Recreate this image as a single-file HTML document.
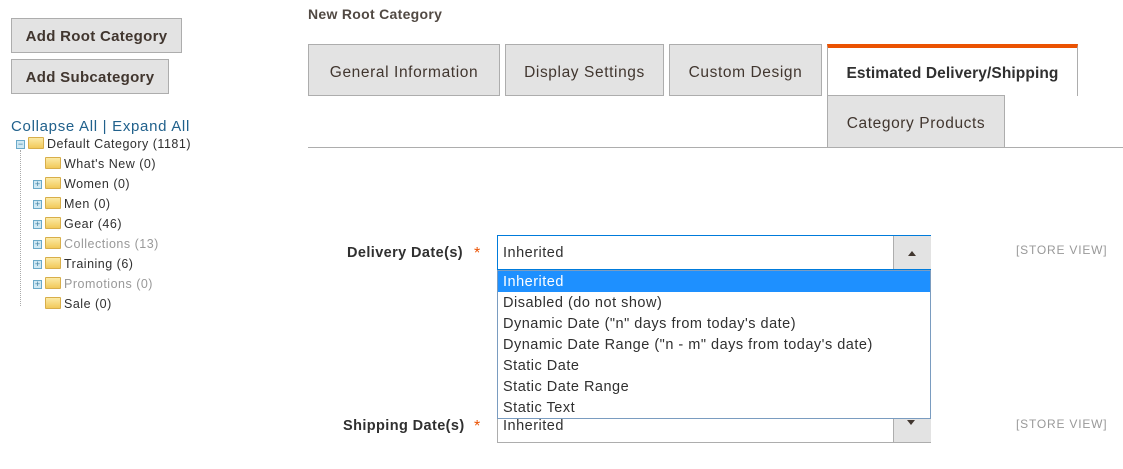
<!DOCTYPE html><html><head><style>
body{margin:0;width:1123px;height:469px;background:#fff;font-family:"Liberation Sans",sans-serif;position:relative;overflow:hidden;color:#303030}
.a{position:absolute}
.btn{position:absolute;background:#e3e3e3;border:1px solid #adadad;color:#41362f;font-size:15px;font-weight:bold;box-sizing:border-box;text-align:center;letter-spacing:0.3px}
.tab{position:absolute;background:#e3e3e3;border:1px solid #adadad;box-sizing:border-box;color:#41362f;font-size:15.5px;text-align:center;line-height:56px;letter-spacing:0.6px}
.tr{position:absolute;font-size:12.5px;color:#303030;white-space:nowrap;letter-spacing:0.5px}
.g{color:#999}
.fold{display:inline-block;width:16px;height:12px;background:linear-gradient(#fbeaa6,#f2c95a);border:1px solid #d8ae4a;box-sizing:border-box;vertical-align:-1px;margin-right:3px;border-radius:1px}
.pl{position:absolute;width:9px;height:9px;border:1px solid #6aa9c9;background:#cfe8f3;box-sizing:border-box;font-size:9px;line-height:7px;text-align:center;color:#3b7fa5}
.opt{position:absolute;left:498px;width:432px;height:21px;font-size:14.5px;line-height:23px;padding-left:5px;box-sizing:border-box;color:#303030;letter-spacing:0.5px;white-space:nowrap}
</style></head><body>
<div class="btn" style="left:11px;top:18px;width:171px;height:35px;line-height:35px">Add Root Category</div>
<div class="btn" style="left:11px;top:59px;width:158px;height:35px;line-height:35px">Add Subcategory</div>
<div class="a" style="left:11px;top:118px;font-size:15px;color:#21618c;letter-spacing:0.7px">Collapse All | Expand All</div>
<div class="a" style="left:20px;top:150px;height:156px;border-left:1px dotted #aaa"></div>
<div class="pl" style="left:16px;top:140px">−</div>
<div class="tr" style="left:28px;top:137px"><span class="fold"></span>Default Category (1181)</div>
<div class="tr" style="left:45px;top:157px"><span class="fold"></span>What's New (0)</div>
<div class="pl" style="left:33px;top:180px">+</div><div class="tr" style="left:45px;top:177px"><span class="fold"></span>Women (0)</div>
<div class="pl" style="left:33px;top:200px">+</div><div class="tr" style="left:45px;top:197px"><span class="fold"></span>Men (0)</div>
<div class="pl" style="left:33px;top:220px">+</div><div class="tr" style="left:45px;top:217px"><span class="fold"></span>Gear (46)</div>
<div class="pl" style="left:33px;top:240px">+</div><div class="tr g" style="left:45px;top:237px"><span class="fold"></span>Collections (13)</div>
<div class="pl" style="left:33px;top:260px">+</div><div class="tr" style="left:45px;top:257px"><span class="fold"></span>Training (6)</div>
<div class="pl" style="left:33px;top:280px">+</div><div class="tr g" style="left:45px;top:277px"><span class="fold"></span>Promotions (0)</div>
<div class="tr" style="left:45px;top:297px"><span class="fold"></span>Sale (0)</div>

<div class="a" style="left:308px;top:6px;font-size:14px;font-weight:bold;color:#514943;letter-spacing:0.3px">New Root Category</div>
<div class="tab" style="left:308px;top:44px;width:192px;height:52px">General Information</div>
<div class="tab" style="left:505px;top:44px;width:159px;height:52px">Display Settings</div>
<div class="tab" style="left:669px;top:44px;width:153px;height:52px">Custom Design</div>
<div class="tab" style="left:827px;top:44px;width:251px;height:52px;background:#fff;border-top:4px solid #eb5202;border-bottom:none;line-height:52px;font-weight:bold;color:#303030;letter-spacing:0.1px">Estimated Delivery/Shipping</div>
<div class="tab" style="left:827px;top:95px;width:178px;height:53px">Category Products</div>
<div class="a" style="left:308px;top:147px;width:815px;height:1px;background:#adadad"></div>

<div class="a" style="left:347px;top:245px;font-size:14.5px;font-weight:bold;color:#303030;letter-spacing:0.4px">Delivery Date(s)</div>
<div class="a" style="left:474px;top:245px;font-size:16px;color:#eb5202">*</div>
<div class="a" style="left:343px;top:418px;font-size:14.5px;font-weight:bold;color:#303030;letter-spacing:0.4px">Shipping Date(s)</div>
<div class="a" style="left:474px;top:418px;font-size:16px;color:#eb5202">*</div>
<div class="a" style="left:1016px;top:243px;font-size:12px;color:#999;letter-spacing:0.8px">[STORE VIEW]</div>
<div class="a" style="left:1016px;top:417px;font-size:12px;color:#999;letter-spacing:0.8px">[STORE VIEW]</div>

<div class="a" style="left:497px;top:408px;width:434px;height:35px;border:1px solid #adadad;box-sizing:border-box"></div>
<div class="a" style="left:893px;top:409px;width:37px;height:33px;background:#e3e3e3;border-left:1px solid #adadad"></div>
<div class="a" style="left:907px;top:420px;border-left:4px solid transparent;border-right:4px solid transparent;border-top:5px solid #41362f"></div>
<div class="a" style="left:503px;top:418px;font-size:14.5px;letter-spacing:0.5px">Inherited</div>

<div class="a" style="left:497px;top:235px;width:434px;height:35px;border:1px solid #007bdb;box-sizing:border-box;background:#fff"></div>
<div class="a" style="left:893px;top:236px;width:37px;height:33px;background:#e3e3e3;border-left:1px solid #adadad"></div>
<div class="a" style="left:908px;top:251px;border-left:4px solid transparent;border-right:4px solid transparent;border-bottom:5px solid #41362f"></div>
<div class="a" style="left:503px;top:245px;font-size:14.5px;letter-spacing:0.5px">Inherited</div>

<div class="a" style="left:497px;top:270px;width:434px;height:149px;border:1px solid #7a9cc0;box-sizing:border-box;background:#fff"></div>
<div class="opt" style="top:271px;background:#1e90ff;color:#fff">Inherited</div>
<div class="opt" style="top:292px">Disabled (do not show)</div>
<div class="opt" style="top:313px">Dynamic Date ("n" days from today's date)</div>
<div class="opt" style="top:334px">Dynamic Date Range ("n - m" days from today's date)</div>
<div class="opt" style="top:355px">Static Date</div>
<div class="opt" style="top:376px">Static Date Range</div>
<div class="opt" style="top:397px">Static Text</div>
</body></html>
